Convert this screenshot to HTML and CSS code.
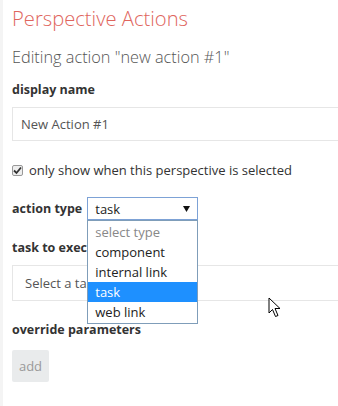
FILE: index.html
```html
<!DOCTYPE html>
<html>
    <head>
        <meta charset="utf-8">
        <title>Perspective Actions</title>
        <link rel="stylesheet" href="styles.css">
    </head>
    <body>
        <div class="page">
            <h1>Perspective Actions</h1>
            <h2>Editing action "new action #1"</h2>

            <label class="field-label first">display name</label>
            <div class="input">New Action #1</div>

            <div class="check-row">
                <span class="checkbox">
                    <svg width="9" height="9" viewBox="0 0 9 9"><path d="M1 4.5 L3.5 7 L8 1.5" fill="none" stroke="#333" stroke-width="1.8"/></svg>
                </span>
                <span>only show when this perspective is selected</span>
            </div>

            <div class="type-row">
                <label class="field-label inline">action type</label>
                <div class="select-wrap">
                    <div class="select">
                        <span>task</span>
                        <svg class="arrow" width="7" height="6" viewBox="0 0 7 6"><path d="M0 0 H7 L3.5 6 Z" fill="#111"/></svg>
                    </div>
                    <ul class="options">
                        <li class="placeholder">select type</li>
                        <li>component</li>
                        <li>internal link</li>
                        <li class="selected">task</li>
                        <li>web link</li>
                    </ul>
                </div>
            </div>

            <label class="field-label task-label">task to execute</label>
            <div class="input task-input">Select a task...</div>

            <label class="field-label override-label">override parameters</label>
            <button type="button" class="add">add</button>
        </div>

        <svg class="cursor" width="14" height="22" viewBox="0 0 14 22">
            <path d="M1 1 L1 16 L4.5 12.5 L7.5 19.5 L10 18.5 L7 11.5 L12 11.5 Z" fill="#fff" stroke="#000" stroke-width="1"/>
        </svg>
    </body>
</html>
```

FILE: styles.css
```css
html {
    font-family: "Open Sans", "Noto Sans", sans-serif;
    font-size: 13px;
}

body {
    margin: 0;
    background: white;
    color: #333;
    position: relative;
    width: 338px;
    height: 406px;
    overflow: hidden;
}

* {
    box-sizing: border-box;
}

.page {
    padding: 4px 0 0 12px;
    border-left: 3px solid #f4f4f4;
    min-height: 406px;
}

h1 {
    margin: 0 0 0 -3px;
    font-weight: 300;
    font-size: 20.2px;
    color: #e0655d;
    line-height: 28px;
}

h2 {
    margin: 13px 0 0 -3px;
    font-weight: 300;
    font-size: 16.3px;
    color: #555;
    line-height: 24px;
}

.field-label {
    display: block;
    font-weight: 700;
    font-size: 12.5px;
    line-height: 18px;
    margin: 9px 0 0 -3px;
}

.field-label.first {
    margin-top: 12px;
}

.input {
    margin: 8px 0 0 -3px;
    height: 34px;
    border: 1px solid #e6e6e6;
    border-right: none;
    padding: 0 8px;
    line-height: 32px;
    font-size: 13px;
    color: #555;
}

.check-row {
    display: flex;
    align-items: center;
    gap: 6px;
    margin: 20px 0 0 -3px;
    font-size: 13px;
    color: #333;
}

.checkbox {
    width: 11px;
    height: 11px;
    border: 1px solid #999;
    border-radius: 2px;
    background: #eee;
    display: flex;
    align-items: center;
    justify-content: center;
}

.type-row {
    display: flex;
    align-items: center;
    gap: 5px;
    margin: 18px 0 0 -3px;
}

.field-label.inline {
    margin: 0;
}

.select-wrap {
    position: relative;
}

.select {
    width: 111px;
    height: 23px;
    border: 1px solid #7da2d6;
    display: flex;
    align-items: center;
    justify-content: space-between;
    padding: 0 7px 0 7px;
    font-size: 13px;
    color: #222;
}

.options {
    position: absolute;
    top: 23px;
    left: 0;
    width: 111px;
    margin: 0;
    padding: 1px 0;
    list-style: none;
    background: white;
    border: 1px solid #7f9db9;
    z-index: 2;
}

.options li {
    height: 20px;
    line-height: 20px;
    padding-left: 7px;
    font-size: 13px;
    color: #222;
}

.options .placeholder {
    color: #888;
}

.options .selected {
    background: #1e90ff;
    color: white;
}

.field-label.task-label {
    margin-top: 19px;
}

.task-input {
    padding-left: 12px;
    height: 36px;
    line-height: 34px;
}

.field-label.override-label {
    margin-top: 20px;
}

.add {
    display: block;
    margin: 11px 0 0 -3px;
    width: 37px;
    height: 32px;
    border: none;
    border-radius: 2px;
    background: #e9ebec;
    color: #999;
    font-family: inherit;
    font-size: 13px;
    padding: 0;
}

.cursor {
    position: absolute;
    left: 268px;
    top: 297px;
}
```
